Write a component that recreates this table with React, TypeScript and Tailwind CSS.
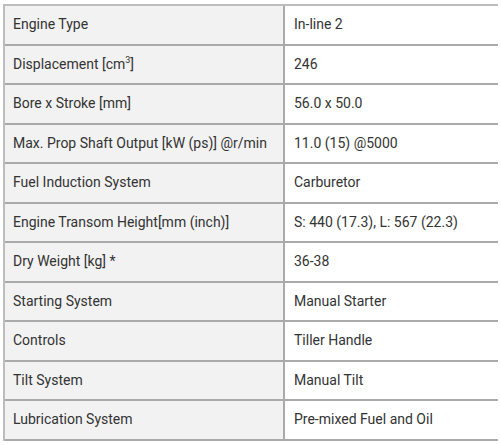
const rows: [React.ReactNode, string][] = [
  ["Engine Type", "In-line 2"],
  [<>Displacement [cm<sup className="text-[9px]">3</sup>]</>, "246"],
  ["Bore x Stroke [mm]", "56.0 x 50.0"],
  ["Max. Prop Shaft Output [kW (ps)] @r/min", "11.0 (15) @5000"],
  ["Fuel Induction System", "Carburetor"],
  ["Engine Transom Height[mm (inch)]", "S: 440 (17.3), L: 567 (22.3)"],
  ["Dry Weight [kg] *", "36-38"],
  ["Starting System", "Manual Starter"],
  ["Controls", "Tiller Handle"],
  ["Tilt System", "Manual Tilt"],
  ["Lubrication System", "Pre-mixed Fuel and Oil"],
];

export default function App() {
  return (
    <div className="w-[501px] h-[445px] bg-white pt-1 pl-[3px] font-['Roboto',sans-serif] text-[14px] text-[#333]">
      <div className="w-[495px] border-t-2 border-l-2 border-[#bdbdbd]">
        {rows.map(([label, value], i) => (
          <div key={i} className="grid grid-cols-[280px_1fr] h-[39.5px] border-b-2 border-[#aaa]">
            <div className="bg-[#f2f2f2] border-r-2 border-[#aaa] flex items-center pl-[8px]">{label}</div>
            <div className="flex items-center pl-[9px]">{value}</div>
          </div>
        ))}
      </div>
    </div>
  );
}
